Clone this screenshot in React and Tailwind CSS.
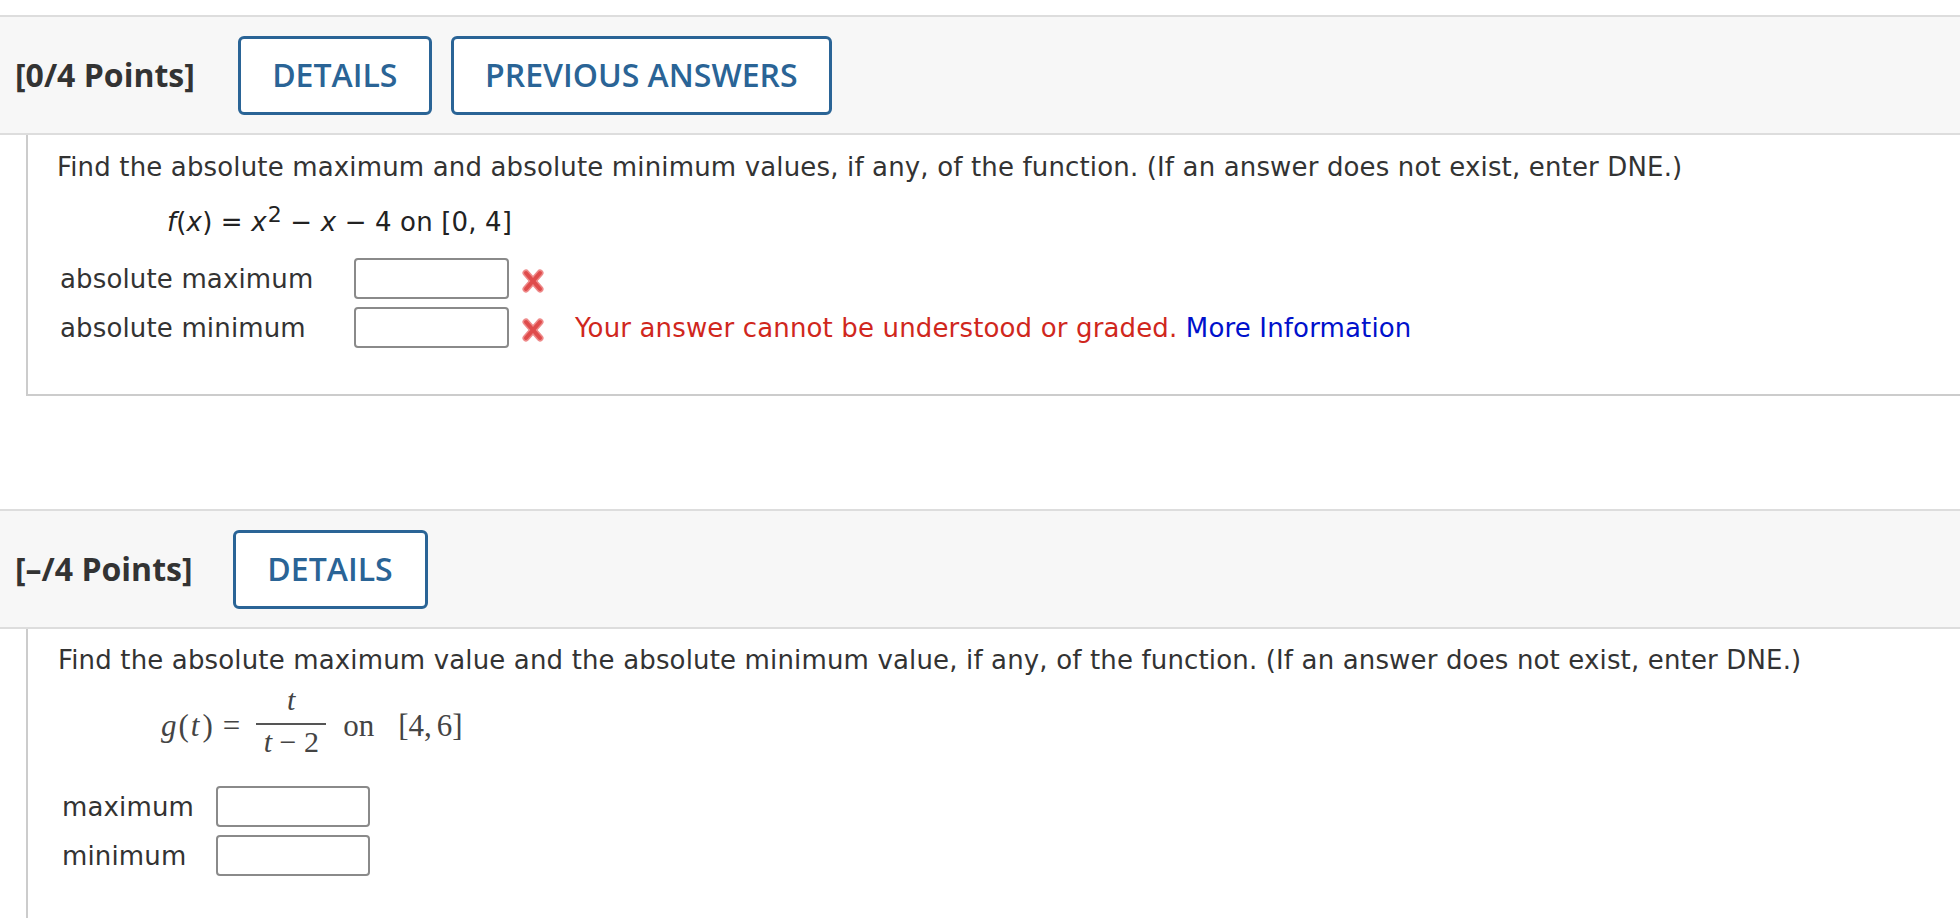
const V = "font-['DejaVu_Sans',Verdana,sans-serif]";
const OS = "font-['Open_Sans',sans-serif]";

function XMark() {
  return (
    <svg width="26" height="26" viewBox="0 0 26 26" className="shrink-0">
      <g stroke="#ee8a8a" strokeWidth="7" strokeLinecap="round">
        <line x1="6" y1="5" x2="20" y2="21" />
        <line x1="20" y1="5" x2="6" y2="21" />
      </g>
      <g stroke="#df4c4c" strokeWidth="4" strokeLinecap="round">
        <line x1="6" y1="5" x2="20" y2="21" />
        <line x1="20" y1="5" x2="6" y2="21" />
      </g>
    </svg>
  );
}

function Btn({ children, w }) {
  return (
    <div
      className={`h-[79px] ${w} border-[3px] border-[#2a6496] rounded-[6px] bg-white flex items-center justify-center text-[#2a6496] text-[32px] font-semibold ${OS}`}
    >
      {children}
    </div>
  );
}

function Input({ w }) {
  return <div className={`h-[41px] ${w} border-2 border-[#8a8a8a] rounded-[4px] bg-white shrink-0`} />;
}

export default function App() {
  return (
    <div className="w-[1960px] h-[918px] bg-white overflow-hidden text-[#333]">
      <div className="h-[15px]" />
      {/* Header 1 */}
      <div className="h-[120px] border-y-2 border-[#dddddd] bg-[#f7f7f7] flex items-center pl-[15px]">
        <div className={`text-[32px] font-bold text-[#333] ${OS}`}>[0/4 Points]</div>
        <div className="ml-[43px] flex gap-[19px]">
          <Btn w="w-[194px]">DETAILS</Btn>
          <Btn w="w-[381px]">PREVIOUS ANSWERS</Btn>
        </div>
      </div>
      {/* Box 1 */}
      <div className={`ml-[26px] h-[261px] border-l-2 border-b-2 border-[#cccccc] pl-[29px] pt-[17px] ${V} text-[26px] leading-[30px] tracking-[0.15px]`}>
        <div className="text-[#333] whitespace-nowrap">
          Find the absolute maximum and absolute minimum values, if any, of the function. (If an answer does not exist, enter DNE.)
        </div>
        <div className="mt-[25px] pl-[110px] text-[#222] whitespace-nowrap">
          <span className="italic">f</span>(<span className="italic">x</span>) = <span className="italic">x</span>
          <sup className="text-[22px] relative top-[-9px] ml-[1px]">2</sup> − <span className="italic">x</span> − 4 on [0, 4]
        </div>
        <div className="mt-[21px] flex flex-col gap-[8px]">
          <div className="flex items-center h-[41px]">
            <div className="w-[297px] pl-[3px]">absolute maximum</div>
            <Input w="w-[155px]" />
            <div className="ml-[11px] mt-[4px]"><XMark /></div>
          </div>
          <div className="flex items-center h-[41px]">
            <div className="w-[297px] pl-[3px]">absolute minimum</div>
            <Input w="w-[155px]" />
            <div className="ml-[11px] mt-[4px]"><XMark /></div>
            <div className="ml-[29px] text-[#d0271d] whitespace-nowrap">
              Your answer cannot be understood or graded. <span className="text-[#0011cc]">More Information</span>
            </div>
          </div>
        </div>
      </div>
      <div className="h-[113px]" />
      {/* Header 2 */}
      <div className="h-[120px] border-y-2 border-[#dddddd] bg-[#f7f7f7] flex items-center pl-[15px]">
        <div className={`text-[32px] font-bold text-[#333] ${OS}`}>[–/4 Points]</div>
        <div className="ml-[40px] flex">
          <Btn w="w-[195px]">DETAILS</Btn>
        </div>
      </div>
      {/* Box 2 */}
      <div className={`ml-[26px] h-[400px] border-l-2 border-[#cccccc] pl-[30px] pt-[16px] ${V} text-[26px] leading-[30px] tracking-[0.15px]`}>
        <div className="text-[#333] whitespace-nowrap">
          Find the absolute maximum value and the absolute minimum value, if any, of the function. (If an answer does not exist, enter DNE.)
        </div>
        <div className="mt-[9px] h-[82px] pl-[103px] flex items-center text-[#444] font-['Liberation_Serif',serif] text-[31px] leading-none tracking-normal">
          <span className="italic tracking-[2px]">g</span>
          <span>(</span>
          <span className="italic pl-[2px] pr-[3px]">t</span>
          <span>)</span>
          <span className="ml-[10px] mr-[16px]">=</span>
          <span className="inline-flex flex-col items-center pb-[8px]">
            <span className="italic h-[30px] leading-[30px] mb-[8px] text-[30px]">t</span>
            <span className="block w-[70px] h-[2px] bg-[#555]" />
            <span className="h-[30px] leading-[30px] text-[30px] whitespace-nowrap mt-[2px]"><span className="italic">t</span> − 2</span>
          </span>
          <span className="ml-[17px]">on</span>
          <span className="ml-[24px] whitespace-nowrap">[4,<span className="ml-[5px]">6]</span></span>
        </div>
        <div className="mt-[20px] flex flex-col gap-[8px]">
          <div className="flex items-center h-[41px]">
            <div className="w-[158px] pl-[4px]">maximum</div>
            <Input w="w-[154px]" />
          </div>
          <div className="flex items-center h-[41px]">
            <div className="w-[158px] pl-[4px]">minimum</div>
            <Input w="w-[154px]" />
          </div>
        </div>
      </div>
    </div>
  );
}
